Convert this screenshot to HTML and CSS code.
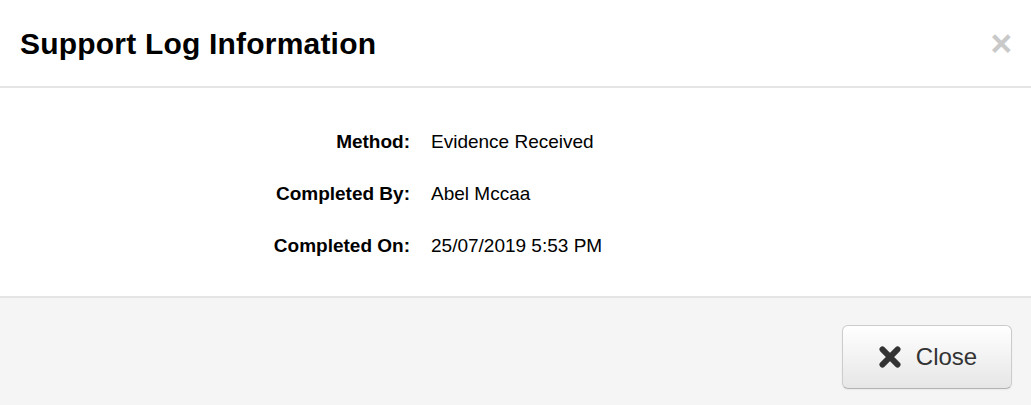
FILE: index.html
```html
<!DOCTYPE html>
<html lang="en">
<head>
  <meta charset="UTF-8">
  <title>Support Log Information</title>
  <link rel="stylesheet" href="styles.css">
</head>
<body>

  <div class="modal">
    <div class="modal-header">
      <h3>Support Log Information</h3>
      <button class="close">&times;</button>
    </div>

    <div class="modal-body">
      <dl class="details">
        <dt>Method:</dt>
        <dd>Evidence Received</dd>
        <dt>Completed By:</dt>
        <dd>Abel Mccaa</dd>
        <dt>Completed On:</dt>
        <dd>25/07/2019 5:53 PM</dd>
      </dl>
    </div>

    <div class="modal-footer">
      <button class="btn">
        <svg class="icon" viewBox="0 0 24 24" width="26" height="26">
          <path d="M5 5 L19 19 M19 5 L5 19" stroke="#333" stroke-width="5.4" stroke-linecap="round"/>
        </svg>
        Close
      </button>
    </div>
  </div>

</body>
</html>
```

FILE: styles.css
```css
body {
  margin: 0;
  font-family: "Liberation Sans", Arial, sans-serif;
  background-color: #fff;
  color: #000;
}
.modal {
  display: flex;
  flex-direction: column;
  height: 405px;
}
.modal-header {
  display: flex;
  align-items: center;
  justify-content: space-between;
  height: 86px;
  padding: 0 20px;
  border-bottom: 2px solid #e5e5e5;
}
.modal-header h3 {
  margin: 0;
  font-size: 30px;
  font-weight: bold;
  letter-spacing: 0.2px;
  padding-top: 2px;
}
.close {
  background: none;
  border: none;
  padding: 0;
  font-family: "Liberation Sans", Arial, sans-serif;
  font-size: 37px;
  font-weight: bold;
  line-height: 1;
  color: #c9c9c9;
  margin-right: -1px;
  cursor: pointer;
}
.modal-body {
  height: 208px;
}
.details {
  display: grid;
  grid-template-columns: 410px 1fr;
  column-gap: 21px;
  row-gap: 30px;
  margin: 0;
  padding-top: 43px;
  font-size: 19px;
  line-height: 22px;
}
.details dt {
  font-weight: bold;
  text-align: right;
}
.details dd {
  margin: 0;
}
.modal-footer {
  flex: 1;
  display: flex;
  justify-content: flex-end;
  align-items: flex-start;
  padding: 27px 19px 0;
  background-color: #f5f5f5;
  border-top: 2px solid #e5e5e5;
}
.btn {
  display: flex;
  align-items: center;
  gap: 13px;
  width: 170px;
  height: 64px;
  justify-content: center;
  padding: 0;
  font-family: "Liberation Sans", Arial, sans-serif;
  font-size: 24px;
  color: #333;
  background: linear-gradient(#ffffff, #e6e6e6);
  border: 1px solid #cccccc;
  border-bottom-color: #b3b3b3;
  border-radius: 6px;
  box-shadow: inset 0 1px 0 rgba(255,255,255,0.2), 0 1px 2px rgba(0,0,0,0.05);
  cursor: pointer;
}
.icon {
  display: block;
}
```
